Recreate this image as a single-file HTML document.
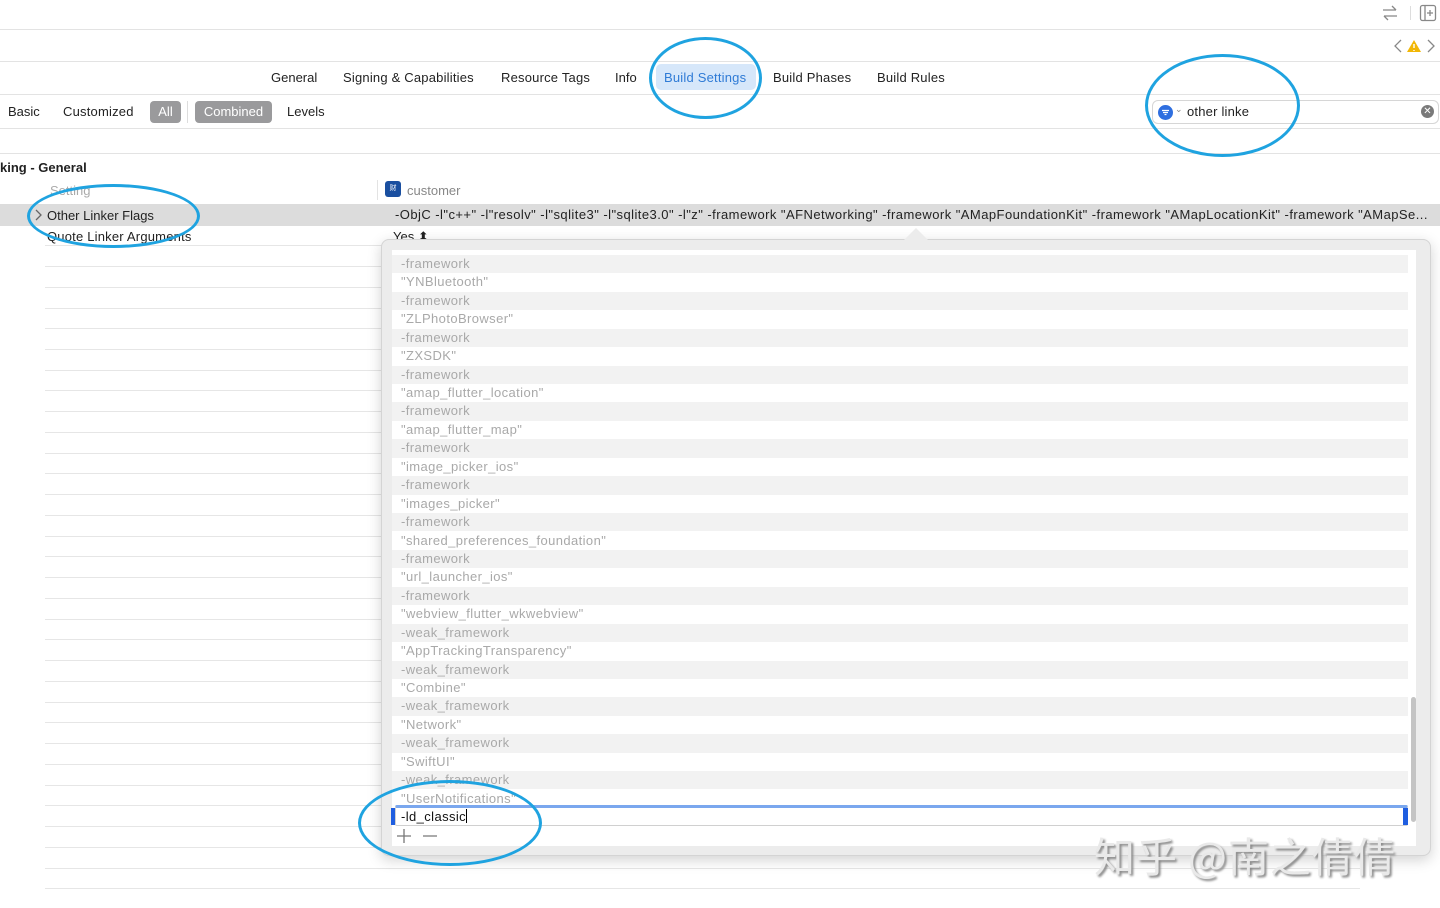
<!DOCTYPE html>
<html><head><meta charset="utf-8"><style>
*{margin:0;padding:0;box-sizing:border-box}
body{width:1440px;height:908px;overflow:hidden;background:#fff;font-family:"Liberation Sans","Noto Sans CJK SC",sans-serif;font-size:13px;color:#222;position:relative}
.a{position:absolute;white-space:nowrap}
.hl{position:absolute;left:0;width:1440px;height:1px;background:#e3e3e3}
.ll{position:absolute;left:45px;width:1315px;height:1px;background:#e6e6e6}
.row{position:absolute;left:392px;width:1016px;height:18.43px;color:#a9a9a9;font-size:13px;line-height:18px;padding-left:9px;letter-spacing:0.4px}
.row.s{background:#f2f2f2}
.ring{position:absolute;border:3px solid #1fa3e0;border-radius:50%}
</style></head><body>
<div class="hl" style="top:29px"></div>
<div class="hl" style="top:61px"></div>
<div class="hl" style="top:94px"></div>
<div class="hl" style="top:128px"></div>
<div class="hl" style="top:153px"></div>

<svg class="a" style="left:1380px;top:4px" width="20" height="18" viewBox="0 0 20 18"><path d="M3 6h13M12 2l4 4M17 12H4M8 16l-4-4" stroke="#888" stroke-width="1.3" fill="none"/></svg>
<div class="a" style="left:1410px;top:6px;width:1px;height:14px;background:#ddd"></div>
<svg class="a" style="left:1419px;top:4px" width="18" height="18" viewBox="0 0 18 18"><rect x="1.5" y="1.5" width="15" height="15" rx="2" stroke="#888" fill="none" stroke-width="1.3"/><path d="M6 1.5v15M11 6v6M8 9h6" stroke="#888" stroke-width="1.3"/></svg>
<svg class="a" style="left:1391px;top:38px" width="46" height="16" viewBox="0 0 46 16"><path d="M10 2L4 8l6 6" stroke="#888" stroke-width="1.3" fill="none"/><path d="M23 2l7 12H16z" fill="#f2b705"/><path d="M23 6v4M23 12v1" stroke="#fff" stroke-width="1.4"/><path d="M37 2l6 6-6 6" stroke="#888" stroke-width="1.3" fill="none"/></svg>

<div class="a" style="left:271px;top:70px">General</div>
<div class="a" style="left:343px;top:70px;letter-spacing:0.2px">Signing &amp; Capabilities</div>
<div class="a" style="left:501px;top:70px;letter-spacing:0.2px">Resource Tags</div>
<div class="a" style="left:615px;top:70px">Info</div>
<div class="a" style="left:656px;top:64px;width:100px;height:26px;background:#d6e7fa;border-radius:5px"></div>
<div class="a" style="left:664px;top:70px;color:#2f7bd6;letter-spacing:0.2px">Build Settings</div>
<div class="a" style="left:773px;top:70px;letter-spacing:0.2px">Build Phases</div>
<div class="a" style="left:877px;top:70px;letter-spacing:0.2px">Build Rules</div>

<div class="a" style="left:8px;top:104px">Basic</div>
<div class="a" style="left:63px;top:104px;letter-spacing:0.2px">Customized</div>
<div class="a" style="left:150px;top:101px;width:31px;height:22px;background:#9a9a9c;border-radius:4px;color:#fff;text-align:center;line-height:22px">All</div>
<div class="a" style="left:187px;top:101px;width:1px;height:22px;background:#ddd"></div>
<div class="a" style="left:195px;top:101px;width:77px;height:22px;background:#9a9a9c;border-radius:4px;color:#fff;text-align:center;line-height:22px">Combined</div>
<div class="a" style="left:287px;top:104px">Levels</div>

<div class="a" style="left:1152px;top:100px;width:287px;height:24px;border:1px solid #d6d6d6;border-radius:6px"></div>
<div class="a" style="left:1158px;top:105px;width:15px;height:15px;border-radius:50%;background:#2f6fe0"></div>
<svg class="a" style="left:1158px;top:105px" width="15" height="15"><path d="M4 5.5h7M5 7.5h5M6.5 9.5h2" stroke="#fff" stroke-width="1.2"/></svg>
<div class="a" style="left:1175px;top:104px;font-size:9px;color:#888">⌄</div>
<div class="a" style="left:1187px;top:104px;letter-spacing:0.2px">other linke</div>
<div class="a" style="left:1421px;top:105px;width:13px;height:13px;border-radius:50%;background:#7a7a7a;color:#fff;font-size:10px;line-height:13px;text-align:center">✕</div>

<div class="a" style="left:0;top:160px;font-weight:bold">king - General</div>
<div class="a" style="left:50px;top:183px;color:#aaa">Setting</div>
<div class="a" style="left:377px;top:180px;width:1px;height:20px;background:#e3e3e3"></div>
<div class="a" style="left:385px;top:181px;width:16px;height:16px;border-radius:3px;background:#1a4fa0;color:#fff;font-size:7px;line-height:16px;text-align:center">财</div>
<div class="a" style="left:407px;top:183px;color:#888">customer</div>

<div class="a" style="left:0;top:204px;width:1440px;height:22px;background:#dcdcdc"></div>
<svg class="a" style="left:34px;top:209px" width="8" height="12"><path d="M2 1l5 5-5 5" stroke="#666" stroke-width="1.3" fill="none"/></svg>
<div class="a" style="left:47px;top:208px">Other Linker Flags</div>
<div class="a" style="left:395px;top:207px;letter-spacing:0.45px">-ObjC -l"c++" -l"resolv" -l"sqlite3" -l"sqlite3.0" -l"z" -framework "AFNetworking" -framework "AMapFoundationKit" -framework "AMapLocationKit" -framework "AMapSe...</div>
<div class="a" style="left:47px;top:229px;letter-spacing:0.2px">Quote Linker Arguments</div>
<div class="a" style="left:393px;top:229px">Yes ⬍</div>

<div class="ll" style="top:245px"></div><div class="ll" style="top:266px"></div><div class="ll" style="top:287px"></div><div class="ll" style="top:308px"></div><div class="ll" style="top:328px"></div><div class="ll" style="top:349px"></div><div class="ll" style="top:370px"></div><div class="ll" style="top:390px"></div><div class="ll" style="top:411px"></div><div class="ll" style="top:432px"></div><div class="ll" style="top:453px"></div><div class="ll" style="top:473px"></div><div class="ll" style="top:494px"></div><div class="ll" style="top:515px"></div><div class="ll" style="top:536px"></div><div class="ll" style="top:556px"></div><div class="ll" style="top:577px"></div><div class="ll" style="top:598px"></div><div class="ll" style="top:619px"></div><div class="ll" style="top:639px"></div><div class="ll" style="top:660px"></div><div class="ll" style="top:681px"></div><div class="ll" style="top:702px"></div><div class="ll" style="top:722px"></div><div class="ll" style="top:743px"></div><div class="ll" style="top:764px"></div><div class="ll" style="top:785px"></div><div class="ll" style="top:805px"></div><div class="ll" style="top:826px"></div><div class="ll" style="top:847px"></div><div class="ll" style="top:868px"></div><div class="ll" style="top:888px"></div>

<div class="a" style="left:381px;top:239px;width:1050px;height:617px;background:#ececec;border:1px solid #d4d4d4;border-radius:8px;box-shadow:0 4px 14px rgba(0,0,0,.18)"></div>
<div class="a" style="left:904px;top:228px;width:0;height:0;border-left:12px solid transparent;border-right:12px solid transparent;border-bottom:12px solid #ececec"></div>
<div class="a" style="left:392px;top:250px;width:1024px;height:596px;background:#fff"></div>
<div class="row s" style="top:255px">-framework</div>
<div class="row" style="top:273.4px">"YNBluetooth"</div>
<div class="row s" style="top:291.9px">-framework</div>
<div class="row" style="top:310.3px">"ZLPhotoBrowser"</div>
<div class="row s" style="top:328.7px">-framework</div>
<div class="row" style="top:347.2px">"ZXSDK"</div>
<div class="row s" style="top:365.6px">-framework</div>
<div class="row" style="top:384px">"amap_flutter_location"</div>
<div class="row s" style="top:402.4px">-framework</div>
<div class="row" style="top:420.9px">"amap_flutter_map"</div>
<div class="row s" style="top:439.3px">-framework</div>
<div class="row" style="top:457.7px">"image_picker_ios"</div>
<div class="row s" style="top:476.2px">-framework</div>
<div class="row" style="top:494.6px">"images_picker"</div>
<div class="row s" style="top:513px">-framework</div>
<div class="row" style="top:531.5px">"shared_preferences_foundation"</div>
<div class="row s" style="top:549.9px">-framework</div>
<div class="row" style="top:568.3px">"url_launcher_ios"</div>
<div class="row s" style="top:586.7px">-framework</div>
<div class="row" style="top:605.2px">"webview_flutter_wkwebview"</div>
<div class="row s" style="top:623.6px">-weak_framework</div>
<div class="row" style="top:642px">"AppTrackingTransparency"</div>
<div class="row s" style="top:660.5px">-weak_framework</div>
<div class="row" style="top:678.9px">"Combine"</div>
<div class="row s" style="top:697.3px">-weak_framework</div>
<div class="row" style="top:715.8px">"Network"</div>
<div class="row s" style="top:734.2px">-weak_framework</div>
<div class="row" style="top:752.6px">"SwiftUI"</div>
<div class="row s" style="top:771px">-weak_framework</div>
<div class="row" style="top:789.5px">"UserNotifications"</div>
<div class="a" style="left:1411px;top:697px;width:5px;height:125px;border-radius:3px;background:#c4c4c4"></div>
<div class="a" style="left:395px;top:805px;width:1013px;height:21px;border:1px solid #d0d0d0;border-top:3px solid #7aa7ee;background:#fff;border-radius:2px"></div>
<div class="a" style="left:391px;top:808px;width:4px;height:17px;background:#1f5ee0"></div>
<div class="a" style="left:1403px;top:808px;width:5px;height:17px;background:#1f5ee0"></div>
<div class="a" style="left:401px;top:809px;color:#111;letter-spacing:0.4px">-ld_classic<span style="display:inline-block;width:1px;height:14px;background:#000;vertical-align:-2px"></span></div>
<svg class="a" style="left:396px;top:828px" width="46" height="16"><path d="M8 1v14M1 8h14M27 8h14" stroke="#777" stroke-width="1.3"/></svg>

<div class="a" style="left:1094px;top:824px;font-size:41px;color:#e9e9e9;font-family:'Noto Sans CJK SC',sans-serif;text-shadow:2px 2px 2px #888;letter-spacing:1px">知乎 @南之倩倩</div>

<div class="ring" style="left:649px;top:37px;width:113px;height:82px"></div>
<div class="ring" style="left:1145px;top:54px;width:155px;height:103px"></div>
<div class="ring" style="left:27px;top:184px;width:173px;height:64px"></div>
<div class="ring" style="left:358px;top:780px;width:184px;height:86px"></div>
</body></html>
